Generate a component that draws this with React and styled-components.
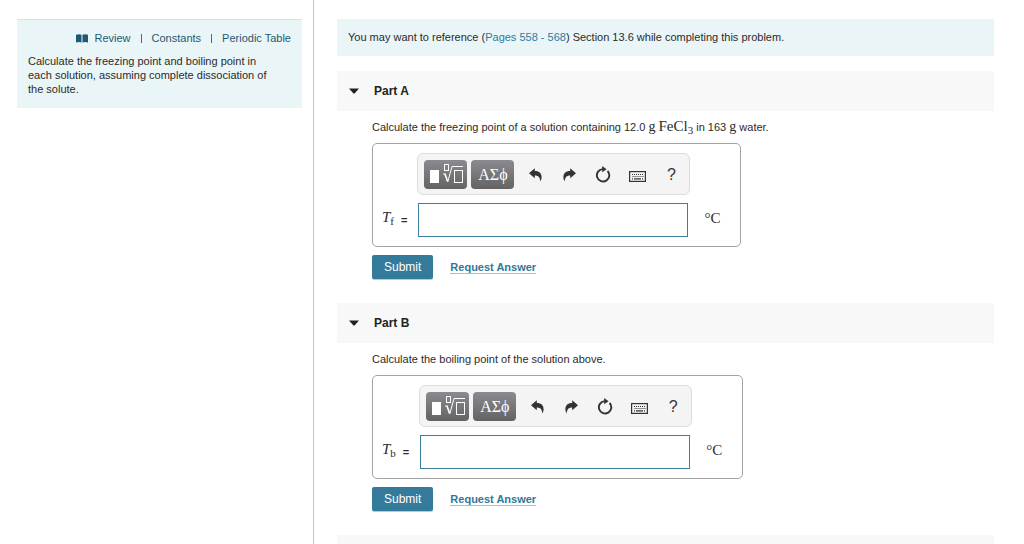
import React from 'react'
import styled, { createGlobalStyle } from 'styled-components'

const GlobalStyle = createGlobalStyle`
    * {
        box-sizing: border-box;
    }

    body {
        margin: 0;
        background: #fff;
        color: #2b2b2b;
        font-family: "Liberation Sans", Arial, sans-serif;
        font-size: 11px;
        line-height: 14px;
    }

    button, input {
        font-family: inherit;
    }
`

const Page = styled.div`
    display: grid;
    grid-template-columns: 314px 1fr;
    height: 100vh;
    overflow: hidden;
`

const Sidebar = styled.aside`
    border-right: 1px solid #bcc6d1;
    padding: 19px 11px 0 17px;
`

const IntroCard = styled.section`
    background: #eaf5f7;
    border-top: 1px solid #dbe2e0;
    padding: 11px 11px 12px;
`

const Resources = styled.nav`
    display: flex;
    justify-content: flex-end;
    align-items: center;
    margin-bottom: 9px;
    white-space: nowrap;
`

const ResourceLink = styled.a`
    display: flex;
    align-items: center;
    gap: 6px;
    color: #1d5a72;
    text-decoration: none;

    &:hover {
        text-decoration: underline;
    }

    & + & {
        margin-left: 10px;
    }

    & + &::before {
        content: "";
        width: 1px;
        height: 9px;
        margin-right: 4px;
        background: #55686f;
    }
`

const IntroText = styled.p`
    margin: 0;
    max-width: 248px;
`

const Main = styled.main`
    padding: 19px 30px 0 23px;
    overflow: hidden;
`

const Hint = styled.p`
    margin: 0 0 15px;
    padding: 11px 11px 12px;
    background: #eaf5f7;

    a {
        color: #2f7a9f;
        text-decoration: none;
    }
`

const PartHeader = styled.h2`
    margin: 0;
    height: 40px;
    background: #f8f8f8;
`

const PartToggle = styled.button`
    display: flex;
    align-items: center;
    gap: 15px;
    width: 100%;
    height: 100%;
    padding: 0 12px;
    border: none;
    background: transparent;
    color: #222;
    font-size: 12px;
    font-weight: 700;
    cursor: pointer;
`

const PartBody = styled.div`
    padding: 8px 0 24px 35px;
`

const Question = styled.p`
    margin: 0 0 8px;
    height: 16px;
    line-height: 16px;
`

const MathText = styled.span`
    font-family: "Liberation Serif", "Times New Roman", serif;
    font-size: ${props => props.$large ? 15 : 14}px;
    line-height: 1;

    sub {
        font-size: 11px;
        line-height: 1;
        vertical-align: -3px;
    }
`

const AnswerBox = styled.div`
    display: inline-grid;
    grid-template-columns: auto 273px auto;
    align-items: center;
    row-gap: 8px;
    padding: 9px 20px 9px 9px;
    border: 1px solid #a3a3a3;
    border-radius: 5px;
    vertical-align: top;
`

const Toolbar = styled.div`
    grid-column: 2;
    display: flex;
    padding: 6px 0 5px 6px;
    border: 1px solid #dcdcdc;
    border-radius: 6px;
    background: #f4f4f4;
`

const PaletteButton = styled.button`
    display: flex;
    flex-shrink: 0;
    align-items: center;
    justify-content: center;
    width: 43px;
    height: 29px;
    margin-right: 4px;
    padding: 0;
    border: none;
    border-radius: 4px;
    background: linear-gradient(#8b8a90, #636363);
    color: #fff;
    font-family: "Liberation Serif", "Times New Roman", serif;
    font-size: 16px;
    cursor: pointer;
`

const ToolButton = styled.button`
    display: flex;
    flex-shrink: 0;
    align-items: center;
    justify-content: center;
    width: 34px;
    height: 29px;
    padding: 0;
    border: none;
    background: transparent;
    color: #333;
    font-size: 16px;
    cursor: pointer;
`

const FieldLabel = styled.label`
    grid-column: 1;
    display: flex;
    align-items: center;
    justify-content: space-between;
    gap: 7px;
    padding-right: 10px;
    font-weight: 700;

    ${MathText} {
        padding-bottom: 3px;
        font-weight: 400;
    }
`

const Field = styled.input`
    width: 270px;
    height: 34px;
    margin: 0 1px;
    padding: 0 8px;
    border: 1px solid #3b7f9f;
    border-radius: 0;
    background: #fff;
    font-size: 14px;
    outline: none;
`

const Unit = styled.span`
    padding: 0 0 4px 14px;
`

const Actions = styled.div`
    display: flex;
    align-items: center;
    gap: 17px;
    margin-top: 8px;
`

const Submit = styled.button`
    height: 24px;
    padding: 0 12px;
    border: none;
    border-radius: 2px;
    background: #337a9b;
    box-shadow: 0 1px 0 #b5ccd8;
    color: #fff;
    font-size: 12px;
    cursor: pointer;
`

const RequestLink = styled.a`
    border-bottom: 1px solid #9fc1d0;
    color: #2f7898;
    font-weight: 700;
    line-height: 12px;
    text-decoration: none;
`

const BookIcon = () => (
    <svg width="12" height="9" viewBox="0 0 12 9" fill="#1d5a72" aria-hidden="true">
        <path d="M0 .8Q3-.5 5.5.8V8.6Q3 7.5 0 8.6Z" />
        <path d="M6.5.8Q9-.5 12 .8V8.6Q9 7.5 6.5 8.6Z" />
    </svg>
)

const CaretIcon = () => (
    <svg width="10" height="6" viewBox="0 0 10 6" fill="#222" aria-hidden="true">
        <path d="M0 .5H10L6 5Q5 6 4 5Z" />
    </svg>
)

const RootIcon = () => (
    <svg width="43" height="29" viewBox="0 0 43 29" fill="none" stroke="#fff" aria-hidden="true">
        <rect x="6" y="10" width="9" height="13" fill="#fff" stroke="none" />
        <rect x="20.5" y="4.5" width="4" height="6" />
        <path d="M19 14H22" />
        <path d="M21 14L23.6 21.5" strokeWidth="1.6" />
        <path d="M23.7 22L28 6.5H39" />
        <rect x="30.5" y="10.5" width="8" height="12" />
    </svg>
)

const UndoIcon = () => (
    <svg width="13" height="14" viewBox="0 0 13 14" fill="currentColor" aria-hidden="true">
        <path d="M0 5.2L5.8.2V3C10.5 3 12.7 5.6 12.6 9.2C12.6 10.8 12.1 12.2 11.3 13.4C11.2 9.5 9.5 7.4 5.8 7.4V10.3Z" />
    </svg>
)

const RedoIcon = () => (
    <svg width="13" height="14" viewBox="0 0 13 14" fill="currentColor" aria-hidden="true">
        <path d="M13 5.2L7.2.2V3C2.5 3 .3 5.6.4 9.2C.4 10.8.9 12.2 1.7 13.4C1.8 9.5 3.5 7.4 7.2 7.4V10.3Z" />
    </svg>
)

const ResetIcon = () => (
    <svg width="16" height="17" viewBox="0 0 16 17" aria-hidden="true">
        <path d="M12.6 5A6.2 6.2 0 1 1 7.5 3.1" fill="none" stroke="currentColor" strokeWidth="1.9" />
        <path d="M7.2 0L11.6 3.2L7.2 6.2Z" fill="currentColor" />
    </svg>
)

const KeyboardIcon = () => (
    <svg width="17" height="14" viewBox="0 0 17 14" fill="none" stroke="currentColor" aria-hidden="true">
        <rect x=".6" y="3.6" width="15.8" height="9.8" strokeWidth="1.2" />
        <path d="M3 6.5H15" strokeDasharray="1 1" />
        <path d="M3.5 8.5H14.5" strokeDasharray="1 1" />
        <path d="M3 10.8H4M5 10.8H12M13 10.8H14" strokeWidth="1.2" />
    </svg>
)

const Part = ({ id, name, symbol, index, children }) => (
    <section>
        <PartHeader>
            <PartToggle type="button" aria-expanded="true">
                <CaretIcon />
                {name}
            </PartToggle>
        </PartHeader>
        <PartBody>
            <Question>{children}</Question>
            <AnswerBox>
                <Toolbar role="toolbar" aria-label="Equation tools">
                    <PaletteButton type="button" aria-label="Templates"><RootIcon /></PaletteButton>
                    <PaletteButton type="button">ΑΣϕ</PaletteButton>
                    <ToolButton type="button" aria-label="Undo"><UndoIcon /></ToolButton>
                    <ToolButton type="button" aria-label="Redo"><RedoIcon /></ToolButton>
                    <ToolButton type="button" aria-label="Reset"><ResetIcon /></ToolButton>
                    <ToolButton type="button" aria-label="Keyboard shortcuts"><KeyboardIcon /></ToolButton>
                    <ToolButton type="button">?</ToolButton>
                </Toolbar>
                <FieldLabel htmlFor={id}>
                    <MathText $large><i>{symbol}</i><sub>{index}</sub></MathText>
                    =
                </FieldLabel>
                <Field id={id} type="text" />
                <Unit><MathText $large>°C</MathText></Unit>
            </AnswerBox>
            <Actions>
                <Submit type="button">Submit</Submit>
                <RequestLink href="#request">Request Answer</RequestLink>
            </Actions>
        </PartBody>
    </section>
)

const App = () => (
    <>
        <GlobalStyle />
        <Page>
            <Sidebar>
                <IntroCard>
                    <Resources>
                        <ResourceLink href="#review"><BookIcon />Review</ResourceLink>
                        <ResourceLink href="#constants">Constants</ResourceLink>
                        <ResourceLink href="#periodic-table">Periodic Table</ResourceLink>
                    </Resources>
                    <IntroText>
                        Calculate the freezing point and boiling point in each solution, assuming complete dissociation of the solute.
                    </IntroText>
                </IntroCard>
            </Sidebar>
            <Main>
                <Hint>
                    You may want to reference (<a href="#pages">Pages 558 - 568</a>) Section 13.6 while completing this problem.
                </Hint>
                <Part id="freezing" name="Part A" symbol="T" index="f">
                    Calculate the freezing point of a solution containing 12.0 <MathText>g</MathText>{' '}
                    <MathText $large>FeCl<sub>3</sub></MathText> in 163 <MathText>g</MathText> water.
                </Part>
                <Part id="boiling" name="Part B" symbol="T" index="b">
                    Calculate the boiling point of the solution above.
                </Part>
                <PartHeader as="div" />
            </Main>
        </Page>
    </>
)

export default App
